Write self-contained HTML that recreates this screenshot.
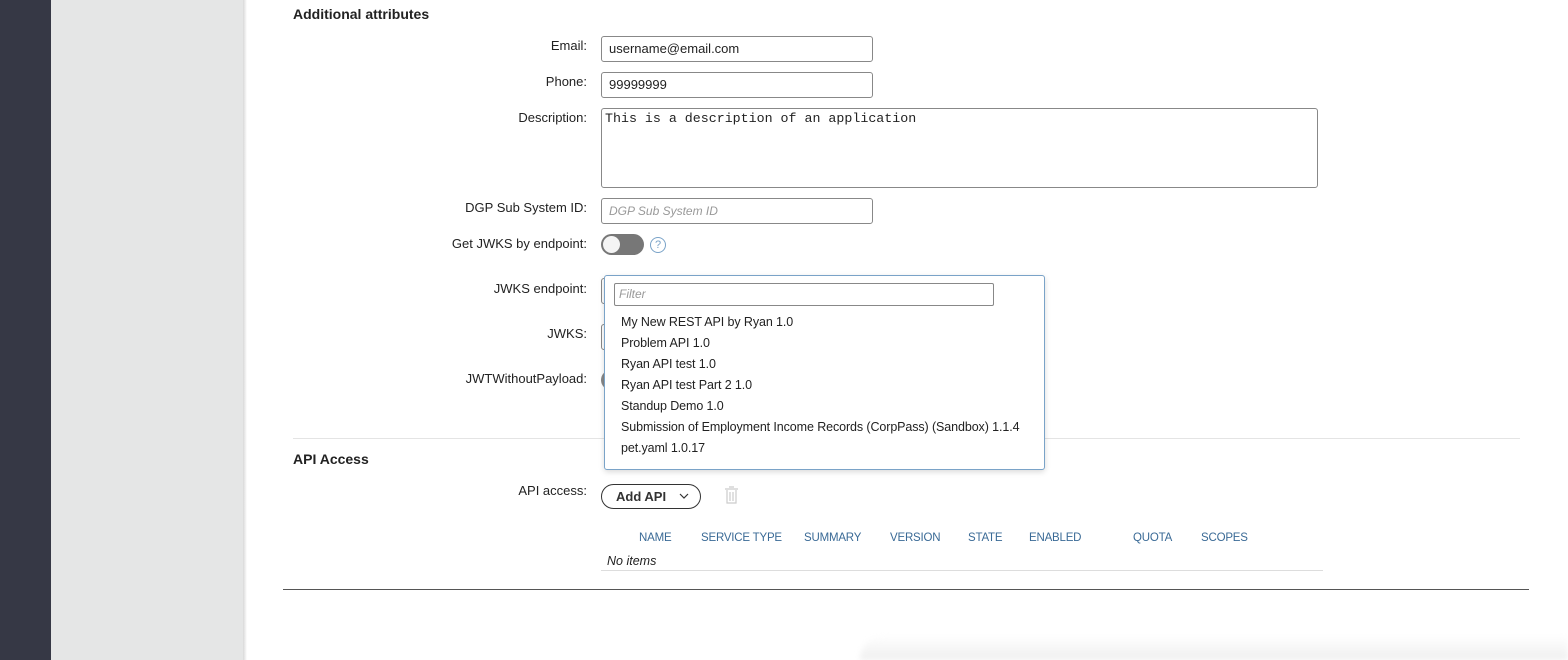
<!DOCTYPE html>
<html><head><meta charset="utf-8"><style>
*{box-sizing:border-box;margin:0;padding:0}
body{width:1568px;height:660px;overflow:hidden;background:#fff;font-family:"Liberation Sans",sans-serif;font-size:13px;color:#222;position:relative}
.a{position:absolute}
.lbl{position:absolute;right:981px;text-align:right;white-space:nowrap;font-size:13px;color:#222}
.inp{position:absolute;border:1px solid #888;border-radius:3px;background:#fff;padding:0 7px;font-size:13px;line-height:24px;height:26px}
.col{position:absolute;top:532px;color:#3a6a96;font-size:11.5px;letter-spacing:-0.2px}
.item{position:absolute;left:621px;font-size:12.5px;color:#222;letter-spacing:-0.1px}
</style></head><body>
<div class="a" style="left:0;top:0;width:51px;height:660px;background:#363845"></div>
<div class="a" style="left:51px;top:0;width:192px;height:660px;background:#e5e6e6"></div>
<div class="a" style="left:243px;top:0;width:4px;height:660px;background:linear-gradient(90deg,#d8d8d8,#fff)"></div>
<div class="a" style="left:293px;top:6px;font-weight:bold;font-size:14px;color:#222">Additional attributes</div>

<div class="lbl" style="top:38px">Email:</div>
<div class="inp" style="left:601px;top:36px;width:272px">username@email.com</div>
<div class="lbl" style="top:74px">Phone:</div>
<div class="inp" style="left:601px;top:72px;width:272px">99999999</div>
<div class="lbl" style="top:110px">Description:</div>
<div class="inp" style="left:601px;top:108px;width:717px;height:80px;font-family:'Liberation Mono',monospace;line-height:18px;padding:1px 3px;font-size:13.3px">This is a description of an application</div>
<div class="lbl" style="top:200px">DGP Sub System ID:</div>
<div class="inp" style="left:601px;top:198px;width:272px;color:#999;font-style:italic;font-size:12px">DGP Sub System ID</div>
<div class="lbl" style="top:236px">Get JWKS by endpoint:</div>
<div class="a" style="left:601px;top:234px;width:43px;height:21px;border-radius:11px;background:#777"></div>
<div class="a" style="left:603px;top:236px;width:17px;height:17px;border-radius:50%;background:#f4f4f4"></div>
<div class="a" style="left:650px;top:237px;width:16px;height:16px;border-radius:50%;border:1px solid #7aa3c8;color:#7aa3c8;font-size:11px;text-align:center;line-height:14px">?</div>

<div class="lbl" style="top:281px">JWKS endpoint:</div>
<div class="inp" style="left:601px;top:278px;width:20px"></div>
<div class="lbl" style="top:326px">JWKS:</div>
<div class="inp" style="left:601px;top:324px;width:20px"></div>
<div class="lbl" style="top:371px">JWTWithoutPayload:</div>
<div class="a" style="left:601px;top:370px;width:20px;height:20px;border-radius:10px;background:#888"></div>

<div class="a" style="left:293px;top:438px;width:1227px;height:1px;background:#e4e4e4"></div>
<div class="a" style="left:293px;top:451px;font-weight:bold;font-size:14px">API Access</div>

<div class="a" style="left:604px;top:275px;width:441px;height:195px;background:#fff;border:1px solid #7aa3c8;border-radius:3px;box-shadow:0 2px 6px rgba(0,0,0,.15)"></div>
<div class="a" style="left:614px;top:283px;width:380px;height:23px;border:1px solid #888;border-radius:2px;padding-left:4px;line-height:21px;color:#999;font-style:italic;font-size:12px">Filter</div>
<div class="item" style="top:315px">My New REST API by Ryan 1.0</div>
<div class="item" style="top:336px">Problem API 1.0</div>
<div class="item" style="top:357px">Ryan API test 1.0</div>
<div class="item" style="top:378px">Ryan API test Part 2 1.0</div>
<div class="item" style="top:399px">Standup Demo 1.0</div>
<div class="item" style="top:420px">Submission of Employment Income Records (CorpPass) (Sandbox) 1.1.4</div>
<div class="item" style="top:441px">pet.yaml 1.0.17</div>

<div class="lbl" style="top:483px">API access:</div>
<div class="a" style="left:601px;top:484px;width:100px;height:25px;border:1px solid #333;border-radius:13px;font-weight:bold;font-size:13px;line-height:23px;padding-left:14px;color:#333">Add API
<svg style="position:absolute;left:77px;top:8px" width="10" height="7" viewBox="0 0 10 7"><path d="M1 1l4 4 4-4" fill="none" stroke="#333" stroke-width="1.2"/></svg></div>
<svg class="a" style="left:724px;top:485px" width="15" height="20" viewBox="0 0 15 20"><path d="M5 2h5M1 4h13M3 5v13h9V5M6 7v9M9 7v9" fill="none" stroke="#ccc" stroke-width="1.2"/></svg>

<div class="col" style="left:639px">NAME</div>
<div class="col" style="left:701px">SERVICE TYPE</div>
<div class="col" style="left:804px">SUMMARY</div>
<div class="col" style="left:890px">VERSION</div>
<div class="col" style="left:968px">STATE</div>
<div class="col" style="left:1029px">ENABLED</div>
<div class="col" style="left:1133px">QUOTA</div>
<div class="col" style="left:1201px">SCOPES</div>
<div class="a" style="left:607px;top:554px;font-style:italic;font-size:12.5px">No items</div>
<div class="a" style="left:601px;top:570px;width:722px;height:1px;background:#ddd"></div>
<div class="a" style="left:283px;top:589px;width:1246px;height:1px;background:#555"></div>
<div class="a" style="left:860px;top:635px;width:708px;height:25px;background:linear-gradient(180deg,#fff,#efefef);border-radius:60px 0 0 0;filter:blur(3px)"></div>
</body></html>
